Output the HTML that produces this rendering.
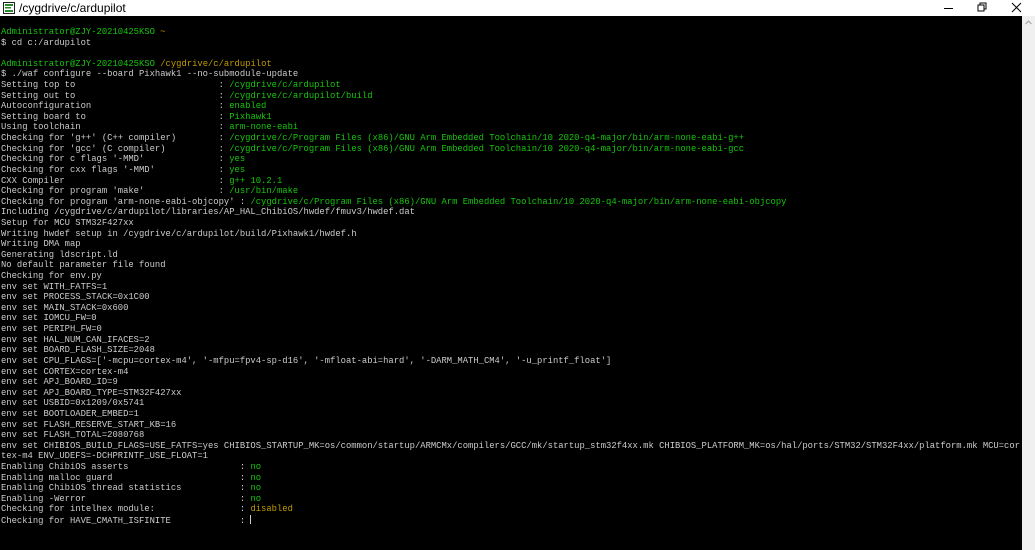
<!DOCTYPE html>
<html><head><meta charset="utf-8"><style>
html,body{margin:0;padding:0;width:1035px;height:550px;overflow:hidden;background:#000}
#tb{position:absolute;left:0;top:0;width:1035px;height:16px;background:#fff;font-family:"Liberation Sans",sans-serif;font-size:12px;color:#000}
#tb .t{position:absolute;left:19px;top:0px;line-height:16px}
#sb{position:absolute;left:1022px;top:16px;width:13px;height:534px;background:#f0f0f0}
pre{position:absolute;left:1px;top:27px;margin:0;font-family:"Liberation Mono",monospace;font-size:8.85px;line-height:10.61px;color:#cccccc;white-space:pre}
.g{color:#16c60c}.y{color:#c19c00}
</style></head><body>
<div id="tb">
<svg style="position:absolute;left:3px;top:2px" width="12" height="12" viewBox="0 0 12 12"><rect x="0.5" y="0.5" width="11" height="11" fill="#fff" stroke="#222"/><rect x="2" y="2" width="8" height="2" fill="#2a8a2a"/><rect x="2" y="5" width="6" height="1.5" fill="#2a8a2a"/><rect x="2" y="8" width="8" height="2" fill="#2a8a2a"/></svg>
<span class="t">/cygdrive/c/ardupilot</span>
<svg style="position:absolute;left:940px;top:2px" width="95" height="12" viewBox="0 0 95 12"><line x1="4" y1="6.5" x2="13" y2="6.5" stroke="#000"/><rect x="38" y="3" width="6" height="6" fill="none" stroke="#000"/><path d="M40 3V1h6v6h-2" fill="none" stroke="#000"/><path d="M72 1l9 9M81 1l-9 9" stroke="#000"/></svg>
</div>
<div id="sb"><svg style="position:absolute;left:3px;top:4px" width="7" height="5"><path d="M0.5 4L3.5 1 6.5 4" fill="none" stroke="#a0a0a0"/></svg></div>
<pre><span class="g">Administrator@ZJY-20210425KSO</span> <span class="y">~</span>
$ cd c:/ardupilot

<span class="g">Administrator@ZJY-20210425KSO</span> <span class="y">/cygdrive/c/ardupilot</span>
$ ./waf configure --board Pixhawk1 --no-submodule-update
Setting top to                           : <span class="g">/cygdrive/c/ardupilot</span>
Setting out to                           : <span class="g">/cygdrive/c/ardupilot/build</span>
Autoconfiguration                        : <span class="g">enabled</span>
Setting board to                         : <span class="g">Pixhawk1</span>
Using toolchain                          : <span class="g">arm-none-eabi</span>
Checking for 'g++' (C++ compiler)        : <span class="g">/cygdrive/c/Program Files (x86)/GNU Arm Embedded Toolchain/10 2020-q4-major/bin/arm-none-eabi-g++</span>
Checking for 'gcc' (C compiler)          : <span class="g">/cygdrive/c/Program Files (x86)/GNU Arm Embedded Toolchain/10 2020-q4-major/bin/arm-none-eabi-gcc</span>
Checking for c flags '-MMD'              : <span class="g">yes</span>
Checking for cxx flags '-MMD'            : <span class="g">yes</span>
CXX Compiler                             : <span class="g">g++ 10.2.1</span>
Checking for program 'make'              : <span class="g">/usr/bin/make</span>
Checking for program 'arm-none-eabi-objcopy' : <span class="g">/cygdrive/c/Program Files (x86)/GNU Arm Embedded Toolchain/10 2020-q4-major/bin/arm-none-eabi-objcopy</span>
Including /cygdrive/c/ardupilot/libraries/AP_HAL_ChibiOS/hwdef/fmuv3/hwdef.dat
Setup for MCU STM32F427xx
Writing hwdef setup in /cygdrive/c/ardupilot/build/Pixhawk1/hwdef.h
Writing DMA map
Generating ldscript.ld
No default parameter file found
Checking for env.py
env set WITH_FATFS=1
env set PROCESS_STACK=0x1C00
env set MAIN_STACK=0x600
env set IOMCU_FW=0
env set PERIPH_FW=0
env set HAL_NUM_CAN_IFACES=2
env set BOARD_FLASH_SIZE=2048
env set CPU_FLAGS=['-mcpu=cortex-m4', '-mfpu=fpv4-sp-d16', '-mfloat-abi=hard', '-DARM_MATH_CM4', '-u_printf_float']
env set CORTEX=cortex-m4
env set APJ_BOARD_ID=9
env set APJ_BOARD_TYPE=STM32F427xx
env set USBID=0x1209/0x5741
env set BOOTLOADER_EMBED=1
env set FLASH_RESERVE_START_KB=16
env set FLASH_TOTAL=2080768
env set CHIBIOS_BUILD_FLAGS=USE_FATFS=yes CHIBIOS_STARTUP_MK=os/common/startup/ARMCMx/compilers/GCC/mk/startup_stm32f4xx.mk CHIBIOS_PLATFORM_MK=os/hal/ports/STM32/STM32F4xx/platform.mk MCU=cor
tex-m4 ENV_UDEFS=-DCHPRINTF_USE_FLOAT=1
Enabling ChibiOS asserts                     : <span class="g">no</span>
Enabling malloc guard                        : <span class="g">no</span>
Enabling ChibiOS thread statistics           : <span class="g">no</span>
Enabling -Werror                             : <span class="g">no</span>
Checking for intelhex module:                : <span class="y">disabled</span>
Checking for HAVE_CMATH_ISFINITE             : <span style="display:inline-block;width:1px;height:9px;background:#ccc;vertical-align:-1px"></span></pre>
</body></html>
